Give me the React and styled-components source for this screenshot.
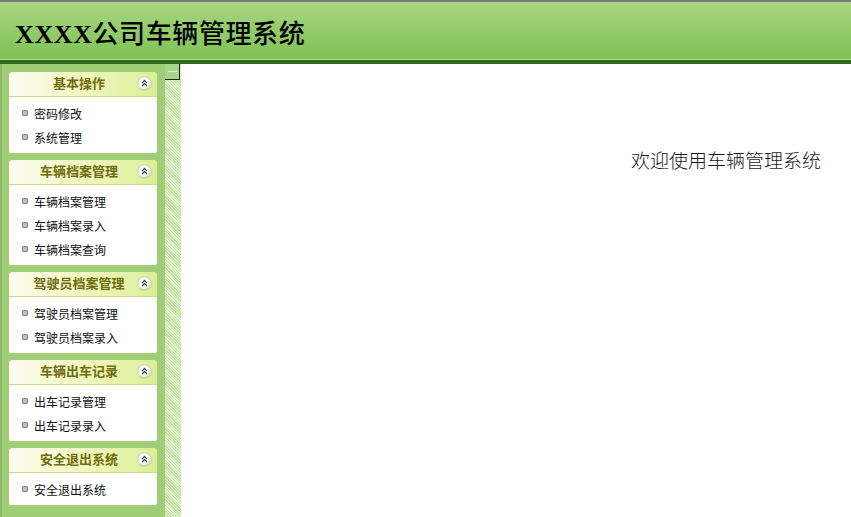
import React from "react";
import styled, { createGlobalStyle } from "styled-components";

const Global = createGlobalStyle`
  html, body { margin: 0; padding: 0; overflow: hidden; }
  body { font-family: "Noto Sans CJK SC", "Liberation Sans", sans-serif; }
`;

const Page = styled.div`
  width: 851px;
  height: 517px;
  display: flex;
  flex-direction: column;
  overflow: hidden;
`;

const Header = styled.header`
  height: 56px;
  border-top: 2px solid #7b7d78;
  border-bottom: 1px solid #b6e08e;
  background: linear-gradient(#a9d684, #95cd6c 45%, #7ec257);
  display: flex;
  align-items: center;
  padding-left: 15px;
  padding-top: 1px;
  box-sizing: content-box;
`;

const Band = styled.div`
  height: 4px;
  background: #2e6a1c;
`;

const Title = styled.h1`
  margin: 0;
  font-size: 26px;
  font-weight: normal;
  color: #000;
  letter-spacing: 0.6px;
`;

const Latin = styled.span`
  font-family: "Liberation Serif", serif;
  font-weight: bold;
`;

const Han = styled.span`
  font-family: "Noto Sans CJK SC", sans-serif;
  font-weight: 500;
`;

const Body = styled.div`
  flex: 1;
  display: flex;
  min-height: 0;
`;

const Sidebar = styled.aside`
  background: #9fcd78;
  border-left: 2px solid #8dbd68;
  padding: 8px 8px 0 7px;
  box-sizing: border-box;
  width: 165px;
  display: flex;
  flex-direction: column;
  gap: 7px;
`;

const Panel = styled.section`
  background: #fff;
  border-radius: 4px 4px 2px 2px;
  overflow: hidden;
`;

const PanelHead = styled.div`
  position: relative;
  height: 24px;
  box-sizing: border-box;
  background: linear-gradient(90deg, #fdfdf1 0%, #f1f7c4 45%, #dcee95 100%);
  border-bottom: 1px solid #c9dc8e;
  display: flex;
  align-items: center;
  justify-content: center;
  padding: 0 8px 3px 0;
  height: 25px;
`;

const PanelTitle = styled.span`
  font-size: 13px;
  line-height: 14px;
  font-weight: bold;
  color: #6f6c0c;
`;

const Toggle = styled.svg`
  position: absolute;
  right: 5px;
  top: 4px;
  width: 15px;
  height: 15px;
`;

const List = styled.ul`
  list-style: none;
  margin: 0;
  padding: 4px 0 4px 0;
`;

const Item = styled.li`
  height: 24px;
  display: flex;
  align-items: center;
  padding-left: 13px;
  font-size: 12px;
  color: #111;
  gap: 6px;
`;

const Bullet = styled.span`
  width: 4px;
  height: 4px;
  border: 1px solid #7b8392;
  border-radius: 1px;
  background: #b9c0cc;
`;

const Splitter = styled.div`
  width: 16px;
  background: repeating-linear-gradient(
    45deg,
    #c2e29f 0px,
    #c2e29f 1px,
    #e6f3d6 1px,
    #e6f3d6 2px
  );
`;

const SplitButton = styled.div`
  width: 15px;
  height: 16px;
  box-sizing: border-box;
  border-right: 1px solid #1d2a12;
  border-bottom: 1px solid #1d2a12;
  background: #a8d58a;
  display: flex;
  align-items: center;
  justify-content: center;
`;

const Dash = styled.span`
  width: 9px;
  height: 1px;
  background: #d6efc3;
`;

const Main = styled.main`
  flex: 1;
  background: #fff;
  padding: 85px 30px 0 0;
  text-align: right;
`;

const Welcome = styled.p`
  margin: 0;
  font-size: 19px;
  line-height: 22px;
  color: #1a1a1a;
  font-weight: 300;
`;

const menus = [
  { title: "基本操作", items: ["密码修改", "系统管理"] },
  { title: "车辆档案管理", items: ["车辆档案管理", "车辆档案录入", "车辆档案查询"] },
  { title: "驾驶员档案管理", items: ["驾驶员档案管理", "驾驶员档案录入"] },
  { title: "车辆出车记录", items: ["出车记录管理", "出车记录录入"] },
  { title: "安全退出系统", items: ["安全退出系统"] },
];

function CollapseIcon() {
  return (
    <Toggle viewBox="0 0 15 15">
      <defs>
        <radialGradient id="cg" cx="40%" cy="35%" r="65%">
          <stop offset="0%" stopColor="#ffffff" />
          <stop offset="70%" stopColor="#f4f4ee" />
          <stop offset="100%" stopColor="#c8cbb8" />
        </radialGradient>
      </defs>
      <circle cx="7.5" cy="7.5" r="6.8" fill="url(#cg)" stroke="#c7cdb0" strokeWidth="0.8" />
      <path d="M5 7 L7.5 4.6 L10 7 M5 10 L7.5 7.6 L10 10" fill="none" stroke="#333" strokeWidth="1.1" />
    </Toggle>
  );
}

export default function App() {
  return (
    <Page>
      <Global />
      <Header>
        <Title>
          <Latin>XXXX</Latin>
          <Han>公司车辆管理系统</Han>
        </Title>
      </Header>
      <Band />
      <Body>
        <Sidebar>
          {menus.map((m) => (
            <Panel key={m.title}>
              <PanelHead>
                <PanelTitle>{m.title}</PanelTitle>
                <CollapseIcon />
              </PanelHead>
              <List>
                {m.items.map((it) => (
                  <Item key={it}>
                    <Bullet />
                    {it}
                  </Item>
                ))}
              </List>
            </Panel>
          ))}
        </Sidebar>
        <Splitter>
          <SplitButton>
            <Dash />
          </SplitButton>
        </Splitter>
        <Main>
          <Welcome>欢迎使用车辆管理系统</Welcome>
        </Main>
      </Body>
    </Page>
  );
}
